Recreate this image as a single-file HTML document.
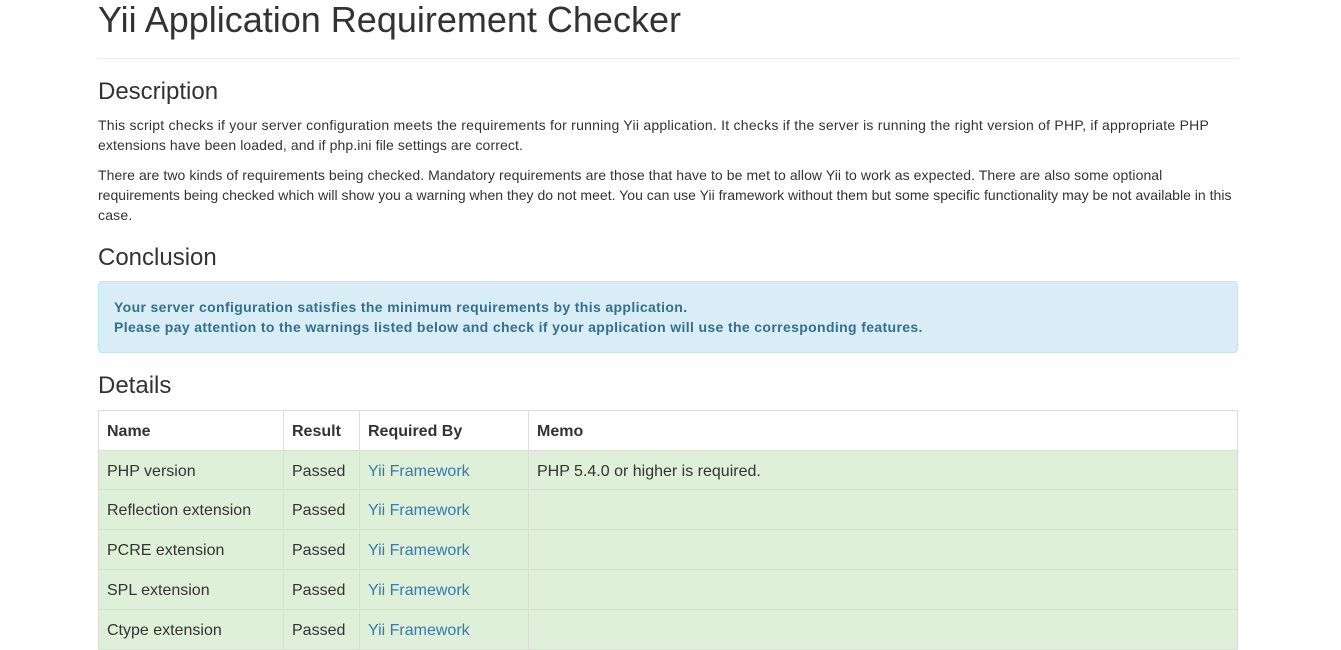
<!DOCTYPE html>
<html><head><meta charset="utf-8"><style>
html,body{margin:0;padding:0;background:#fff;}
body{font-family:"Liberation Sans",Arial,sans-serif;font-size:14px;line-height:20px;color:#333;overflow:hidden;height:600px;}
.c{position:absolute;left:98px;width:1140px;top:0;}
.ph{border-bottom:1px solid #eee;padding-bottom:18px;}
h1{font-size:36px;font-weight:500;line-height:39.6px;margin:0;}
h3{font-size:24px;font-weight:500;line-height:26.4px;margin:20px 0 10px;}
p{margin:0 0 10px;white-space:nowrap;}
p span{display:block;}
.al{background:#d9edf7;border:1px solid #bce8f1;color:#31708f;border-radius:4px;padding:15px;font-weight:bold;margin-bottom:20px;letter-spacing:0.36px;}
table{width:100%;border-collapse:collapse;font-size:16px;line-height:22.8px;}
th,td{border:1px solid #ddd;padding:10px 8px 6px;text-align:left;vertical-align:top;}
th{font-weight:bold;}
tbody tr{background:#dff0d8;}
a{color:#337ab7;text-decoration:none;}
</style></head><body><div class="c">
<div class="ph"><h1>Yii Application Requirement Checker</h1></div>
<h3>Description</h3>
<p><span style="letter-spacing:0.24px">This script checks if your server configuration meets the requirements for running Yii application. It checks if the server is running the right version of PHP, if appropriate PHP</span><span style="letter-spacing:0.1px">extensions have been loaded, and if php.ini file settings are correct.</span></p>
<p><span style="letter-spacing:0.08px">There are two kinds of requirements being checked. Mandatory requirements are those that have to be met to allow Yii to work as expected. There are also some optional</span><span style="letter-spacing:0.02px">requirements being checked which will show you a warning when they do not meet. You can use Yii framework without them but some specific functionality may be not available in this</span><span style="letter-spacing:0.2px">case.</span></p>
<h3>Conclusion</h3>
<div class="al">Your server configuration satisfies the minimum requirements by this application.<br>Please pay attention to the warnings listed below and check if your application will use the corresponding features.</div>
<h3>Details</h3>
<table><thead><tr><th style="width:168px">Name</th><th style="width:59px">Result</th><th style="width:152px">Required By</th><th>Memo</th></tr></thead>
<tbody>
<tr><td>PHP version</td><td>Passed</td><td><a>Yii Framework</a></td><td>PHP 5.4.0 or higher is required.</td></tr>
<tr><td>Reflection extension</td><td>Passed</td><td><a>Yii Framework</a></td><td></td></tr>
<tr><td>PCRE extension</td><td>Passed</td><td><a>Yii Framework</a></td><td></td></tr>
<tr><td>SPL extension</td><td>Passed</td><td><a>Yii Framework</a></td><td></td></tr>
<tr><td>Ctype extension</td><td>Passed</td><td><a>Yii Framework</a></td><td></td></tr>
</tbody></table>
</div></body></html>
